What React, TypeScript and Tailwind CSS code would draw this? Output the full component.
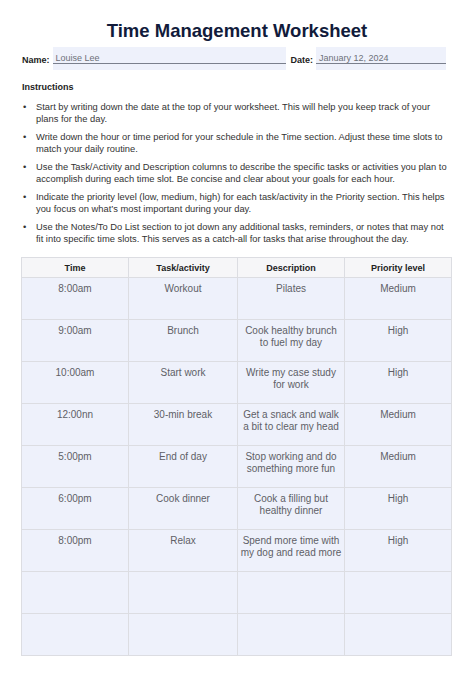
const rows = [
  { time: "8:00am", task: "Workout", desc: "Pilates", priority: "Medium" },
  { time: "9:00am", task: "Brunch", desc: "Cook healthy brunch to fuel my day", priority: "High" },
  { time: "10:00am", task: "Start work", desc: "Write my case study for work", priority: "High" },
  { time: "12:00nn", task: "30-min break", desc: "Get a snack and walk a bit to clear my head", priority: "Medium" },
  { time: "5:00pm", task: "End of day", desc: "Stop working and do something more fun", priority: "Medium" },
  { time: "6:00pm", task: "Cook dinner", desc: "Cook a filling but healthy dinner", priority: "High" },
  { time: "8:00pm", task: "Relax", desc: "Spend more time with my dog and read more", priority: "High" },
  { time: "", task: "", desc: "", priority: "" },
  { time: "", task: "", desc: "", priority: "" },
];

const instructions = [
  "Start by writing down the date at the top of your worksheet. This will help you keep track of your plans for the day.",
  "Write down the hour or time period for your schedule in the Time section. Adjust these time slots to match your daily routine.",
  "Use the Task/Activity and Description columns to describe the specific tasks or activities you plan to accomplish during each time slot. Be concise and clear about your goals for each hour.",
  "Indicate the priority level (low, medium, high) for each task/activity in the Priority section. This helps you focus on what\u2019s most important during your day.",
  "Use the Notes/To Do List section to jot down any additional tasks, reminders, or notes that may not fit into specific time slots. This serves as a catch-all for tasks that arise throughout the day.",
];

function Field({ label, value, className }: { label: string; value: string; className: string }) {
  return (
    <div className="flex items-start">
      <span className="mt-[7px] mr-[3px] text-[9px] leading-[12px] font-bold text-[#222]">{label}</span>
      <div className={`h-[23px] bg-[#eef1fb] ${className}`}>
        <div className="flex h-[17px] items-end border-b border-[#7a7f8c] pl-[3px]">
          <span className="text-[9px] leading-[10px] text-[#6d7079]">{value}</span>
        </div>
      </div>
    </div>
  );
}

export default function App() {
  return (
    <div className="min-h-[676px] w-[474px] bg-white font-['Liberation_Sans',Arial,sans-serif]">
      <h1 className="pt-[20px] text-center text-[18.5px] leading-[22px] font-bold text-[#111b3b]">
        Time Management Worksheet
      </h1>

      <div className="mt-[5px] flex justify-between pr-[28px] pl-[22px]">
        <Field label="Name:" value="Louise Lee" className="w-[233px]" />
        <Field label="Date:" value="January 12, 2024" className="w-[130px]" />
      </div>

      <section className="px-[22px]">
        <h2 className="mt-[11px] text-[9px] leading-[12px] font-bold text-[#222]">Instructions</h2>
        <ul className="mt-[8px] pr-[1px]">
          {instructions.map((text) => (
            <li key={text} className="mb-[6px] flex text-[9.35px] leading-[12px] text-[#333]">
              <span className="w-[14px] shrink-0 pl-[1px]">&bull;</span>
              <span>{text}</span>
            </li>
          ))}
        </ul>
      </section>

      <div className="mt-[12px] px-[21px]">
        <table className="w-[430px] table-fixed border-collapse text-center">
          <colgroup>
            <col className="w-[107px]" />
            <col className="w-[109px]" />
            <col className="w-[107px]" />
            <col className="w-[107px]" />
          </colgroup>
          <thead>
            <tr className="h-[20px] bg-[#f6f6f8]">
              {["Time", "Task/activity", "Description", "Priority level"].map((h) => (
                <th key={h} className="border border-[#dcdde2] text-[9px] leading-[12px] font-bold text-[#222]">
                  {h}
                </th>
              ))}
            </tr>
          </thead>
          <tbody>
            {rows.map((r, i) => (
              <tr key={i} className="h-[42px] bg-[#eef1fb]">
                {[r.time, r.task, r.desc, r.priority].map((c, j) => (
                  <td
                    key={j}
                    className="border border-[#dcdde2] p-0 pt-[5px] align-top text-[10px] leading-[12px] text-[#5e5f66]"
                  >
                    <div className="mx-auto w-[102.3px]">{c}</div>
                  </td>
                ))}
              </tr>
            ))}
          </tbody>
        </table>
      </div>
    </div>
  );
}
